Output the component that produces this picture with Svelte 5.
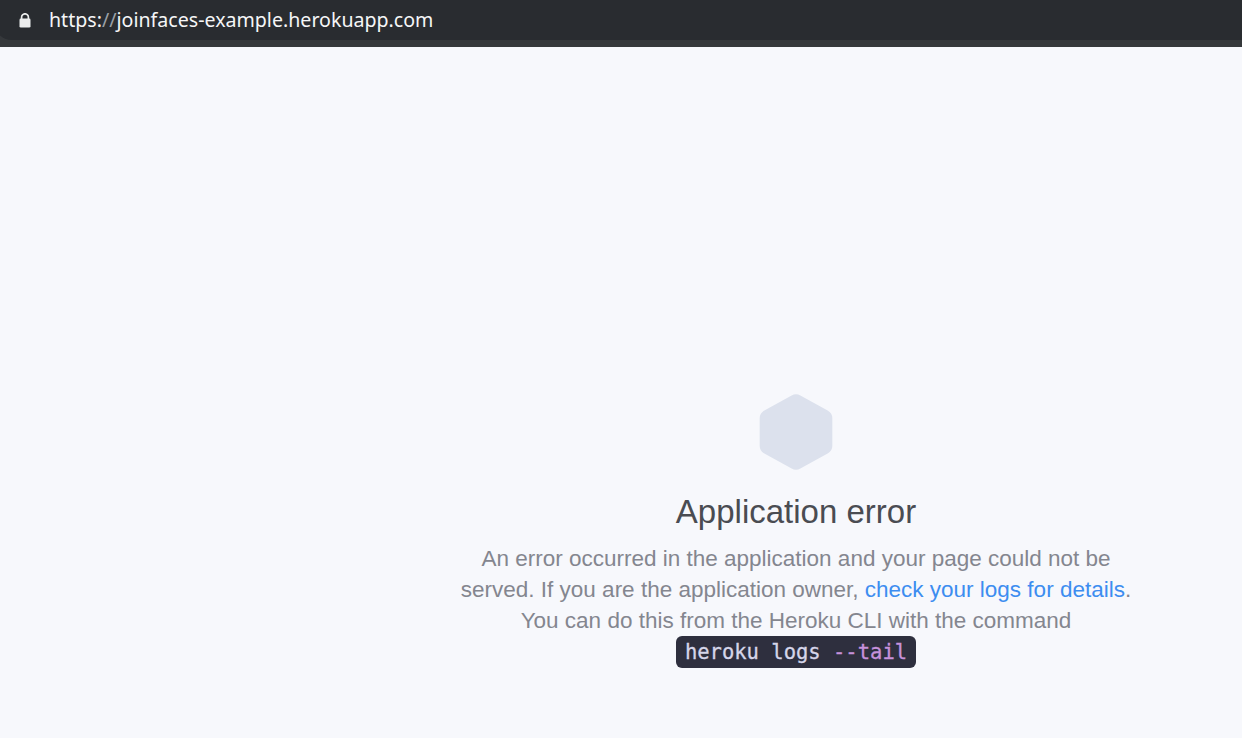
<script>
  const url = { scheme: 'https:', slashes: '//', host: 'joinfaces-example.herokuapp.com' };
</script>

<div class="page">
  <header class="toolbar">
    <div class="address">
      <svg class="lock" width="12" height="15" viewBox="0 0 12 15" aria-hidden="true">
        <path d="M2.6 6V4.2a3.4 3.4 0 0 1 6.8 0V6" fill="none" stroke="#eceded" stroke-width="1.7" />
        <rect x="0.5" y="5.6" width="11" height="8.9" rx="1.3" fill="#eceded" />
      </svg>
      <span class="url">{url.scheme}<span class="slashes">{url.slashes}</span>{url.host}</span>
    </div>
  </header>

  <main class="content">
    <svg class="hex" width="74" height="76" viewBox="0 0 76 78" preserveAspectRatio="none" aria-hidden="true">
      <path
        d="M33.5 1.6a9 9 0 0 1 9 0L70.5 17a9 9 0 0 1 4.8 8v28a9 9 0 0 1-4.8 8L42.5 76.4a9 9 0 0 1-9 0L5.5 61a9 9 0 0 1-4.8-8V25a9 9 0 0 1 4.8-8z"
        fill="#dce1ed"
      />
    </svg>
    <h1>Application error</h1>
    <p>
      An error occurred in the application and your page could not be served. If you are the
      application owner, <a href="#logs">check your logs for details</a>. You can do this from the
      Heroku CLI with the command
      <code>heroku logs <span class="flag">--tail</span></code>
    </p>
  </main>
</div>

<style>
  :global(body) {
    background: #f7f8fc;
  }

  .page {
    display: flex;
    flex-direction: column;
    height: 738px;
    overflow: hidden;
    background: #f7f8fc;
  }

  .toolbar {
    flex: none;
    height: 47px;
    background: #35383b;
    box-sizing: border-box;
    padding-bottom: 7px;
  }

  .address {
    display: flex;
    align-items: center;
    height: 40px;
    margin-left: -6px;
    padding-left: 25px;
    background: #292c30;
    border-bottom-left-radius: 18px;
  }

  .lock {
    flex: none;
  }

  .url {
    margin: -2px 0 0 18px;
    font-family: "Noto Sans", sans-serif;
    font-size: 19.6px;
    color: #f5f6f7;
    white-space: nowrap;
  }

  .slashes {
    color: #9aa0a6;
  }

  .content {
    display: flex;
    flex-direction: column;
    align-items: center;
    padding: 347px 0 0 350px;
    font-family: "Liberation Sans", Arial, sans-serif;
  }

  .hex {
    display: block;
  }

  h1 {
    margin: 21px 0 0;
    font-size: 33px;
    line-height: 42px;
    font-weight: 400;
    color: #4a4c52;
  }

  p {
    width: 680px;
    margin: 10px 0 0;
    font-size: 22.5px;
    line-height: 31px;
    text-align: center;
    color: #84868f;
  }

  a {
    color: #3d8df0;
    text-decoration: none;
  }

  code {
    display: inline-block;
    padding: 0 9px;
    height: 32px;
    line-height: 32px;
    border-radius: 6px;
    background: #2e2f3e;
    color: #d6d6ea;
    font-family: "DejaVu Sans Mono", monospace;
    font-size: 20.5px;
    -webkit-text-stroke: 0.3px currentColor;
    vertical-align: top;
  }

  .flag {
    color: #c792dc;
  }
</style>
